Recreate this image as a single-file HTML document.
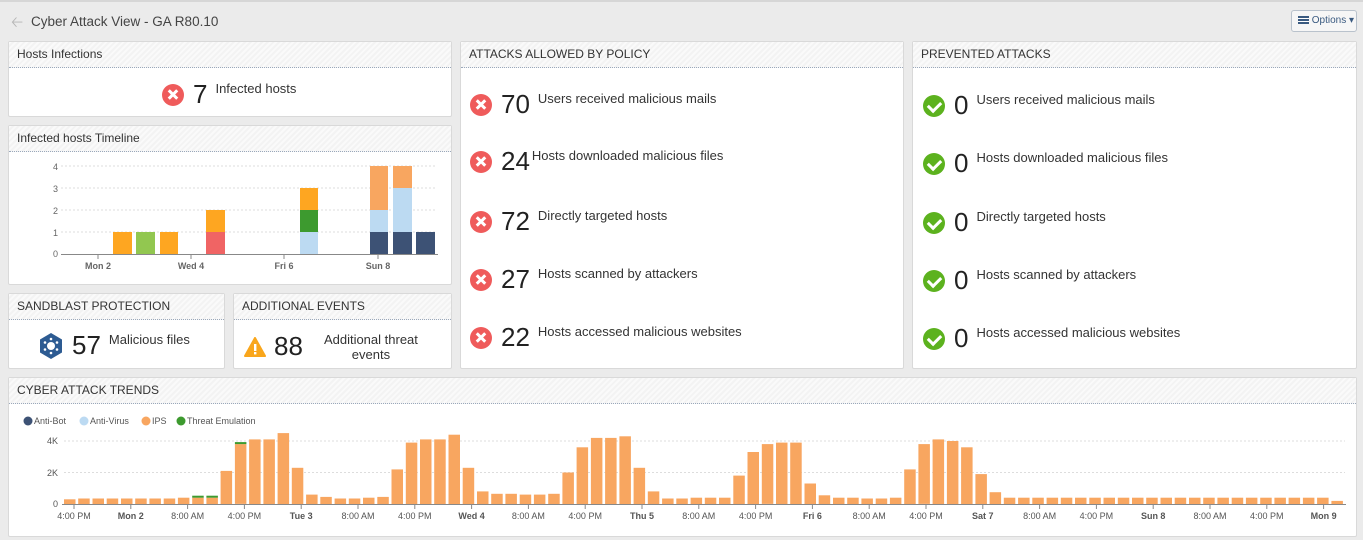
<!DOCTYPE html>
<html><head><meta charset="utf-8"><style>
*{box-sizing:border-box;margin:0;padding:0}
body{width:1363px;height:540px;background:#ebebeb;font-family:"Liberation Sans",sans-serif;color:#333;position:relative;overflow:hidden}
.p{position:absolute;background:#fff;border:1px solid #d9d9d9;border-radius:2px}
.h{height:26px;border-bottom:1px dotted #9aa8bb;background:repeating-linear-gradient(135deg,#fafafa 0 2px,#f3f3f3 2px 4px);font-size:12px;line-height:24px;padding-left:8px;color:#333}
.ab{position:absolute;display:flex;align-items:center}
.num{font-size:26px;color:#222;margin:0 8px 0 9px}
.lbl{font-size:13px;color:#333;position:relative;top:-6px}
.x{width:22px;height:22px;border-radius:50%;background:#ef5b5b;position:relative}
.x:before,.x:after{content:"";position:absolute;left:5px;top:9.5px;width:12px;height:3px;background:#fff;transform:rotate(45deg)}
.x:after{transform:rotate(-45deg)}
.ok{width:22px;height:22px;border-radius:50%;background:#5cb21e;position:relative}
.ok:after{content:"";position:absolute;left:7px;top:4px;width:6px;height:10px;border:solid #fff;border-width:0 3px 3px 0;transform:rotate(45deg)}
</style></head><body>
<div style="position:absolute;left:0;top:0;width:1363px;height:2px;background:#d6d6d6"></div>
<div style="position:absolute;left:11px;top:12px;color:#b5b5b5;font-size:15px">&#129120;</div>
<div style="position:absolute;left:31px;top:14px;font-size:13.5px;color:#444">Cyber Attack View - GA R80.10</div>
<div style="position:absolute;left:1291px;top:10px;width:66px;height:22px;border:1px solid #b9c2cc;border-radius:3px;background:#f6f6f6;font-size:10px;line-height:20px;padding-left:6px;color:#3a5a80"><span style="display:inline-block;width:11px;height:8px;border-top:2px solid #3a5a80;border-bottom:2px solid #3a5a80;position:relative;top:1px;background:linear-gradient(#fff 0 1px,#3a5a80 1px 3px,#fff 3px)"></span> Options ▾</div>

<div class="p" style="left:8px;top:41px;width:444px;height:76px"><div class="h">Hosts Infections</div>
<div class="ab" style="left:153px;top:37px"><div class="x"></div><span class="num">7</span><span class="lbl">Infected hosts</span></div></div>

<div class="p" style="left:8px;top:125px;width:444px;height:160px"><div class="h">Infected hosts Timeline</div>
<svg style="position:absolute;left:0;top:0" width="444" height="160" font-family="Liberation Sans" font-size="9" fill="#666">
<g stroke="#ddd" stroke-dasharray="2,2"><line x1="52" x2="428" y1="40" y2="40"/><line x1="52" x2="428" y1="62" y2="62"/><line x1="52" x2="428" y1="84" y2="84"/><line x1="52" x2="428" y1="106" y2="106"/></g>
<text x="44" y="44">4</text><text x="44" y="66">3</text><text x="44" y="88">2</text><text x="44" y="110">1</text><text x="44" y="131">0</text>
<rect x="104" y="106" width="19" height="22" fill="#fea621"/>
<rect x="127" y="106" width="19" height="22" fill="#92c750"/>
<rect x="151" y="106" width="18" height="22" fill="#fea621"/>
<rect x="197" y="106" width="19" height="22" fill="#f06464"/><rect x="197" y="84" width="19" height="22" fill="#fea621"/>
<rect x="291" y="106" width="18" height="22" fill="#bcdaf2"/><rect x="291" y="84" width="18" height="22" fill="#3d9a2f"/><rect x="291" y="62" width="18" height="22" fill="#fea621"/>
<rect x="361" y="106" width="18" height="22" fill="#3d5275"/><rect x="361" y="84" width="18" height="22" fill="#bcdaf2"/><rect x="361" y="40" width="18" height="44" fill="#f8a660"/>
<rect x="384" y="106" width="19" height="22" fill="#3d5275"/><rect x="384" y="62" width="19" height="44" fill="#bcdaf2"/><rect x="384" y="40" width="19" height="22" fill="#f8a660"/>
<rect x="407" y="106" width="19" height="22" fill="#3d5275"/>
<line x1="52" x2="429" y1="128.5" y2="128.5" stroke="#888"/>
<g stroke="#888"><line x1="89" x2="89" y1="128" y2="133"/><line x1="182" x2="182" y1="128" y2="133"/><line x1="275" x2="275" y1="128" y2="133"/><line x1="369" x2="369" y1="128" y2="133"/></g>
<g font-weight="bold" text-anchor="middle"><text x="89" y="143">Mon 2</text><text x="182" y="143">Wed 4</text><text x="275" y="143">Fri 6</text><text x="369" y="143">Sun 8</text></g>
</svg></div>

<div class="p" style="left:8px;top:293px;width:217px;height:76px"><div class="h">SANDBLAST PROTECTION</div>
<div class="ab" style="left:30px;top:36px"><svg width="24" height="26" viewBox="0 0 24 26"><polygon points="12,0 23,6.5 23,19.5 12,26 1,19.5 1,6.5" fill="#2d5b92"/><circle cx="12" cy="13" r="4" fill="#fff"/><g fill="#fff"><circle cx="12" cy="6" r="1.3"/><circle cx="12" cy="20" r="1.3"/><circle cx="6" cy="9.5" r="1.3"/><circle cx="18" cy="9.5" r="1.3"/><circle cx="6" cy="16.5" r="1.3"/><circle cx="18" cy="16.5" r="1.3"/></g></svg><span class="num">57</span><span class="lbl">Malicious files</span></div></div>

<div class="p" style="left:233px;top:293px;width:219px;height:76px"><div class="h">ADDITIONAL EVENTS</div>
<div class="ab" style="left:10px;top:37px"><svg width="22" height="20"><polygon points="11,1 21,19 1,19" fill="#f9a61c" stroke="#f9a61c" stroke-linejoin="round" stroke-width="2"/><rect x="10" y="7" width="2.4" height="7" fill="#fff"/><rect x="10" y="15" width="2.4" height="2.4" fill="#fff"/></svg><span class="num" style="margin-left:8px">88</span><span style="font-size:13px;text-align:center;width:120px;line-height:15px;position:relative;top:0">Additional threat<br>events</span></div></div>

<div class="p" style="left:460px;top:41px;width:444px;height:328px"><div class="h">ATTACKS ALLOWED BY POLICY</div>
<div class="ab" style="left:9px;top:47px"><div class="x"></div><span class="num">70</span><span class="lbl">Users received malicious mails</span></div>
<div class="ab" style="left:9px;top:104px"><div class="x"></div><span class="num">24</span><span class="lbl" style="margin-left:-6px">Hosts downloaded malicious files</span></div>
<div class="ab" style="left:9px;top:164px"><div class="x"></div><span class="num">72</span><span class="lbl">Directly targeted hosts</span></div>
<div class="ab" style="left:9px;top:222px"><div class="x"></div><span class="num">27</span><span class="lbl">Hosts scanned by attackers</span></div>
<div class="ab" style="left:9px;top:280px"><div class="x"></div><span class="num">22</span><span class="lbl">Hosts accessed malicious websites</span></div></div>

<div class="p" style="left:912px;top:41px;width:445px;height:328px"><div class="h">PREVENTED ATTACKS</div>
<div class="ab" style="left:10px;top:48px"><div class="ok"></div><span class="num">0</span><span class="lbl">Users received malicious mails</span></div>
<div class="ab" style="left:10px;top:106px"><div class="ok"></div><span class="num">0</span><span class="lbl">Hosts downloaded malicious files</span></div>
<div class="ab" style="left:10px;top:165px"><div class="ok"></div><span class="num">0</span><span class="lbl">Directly targeted hosts</span></div>
<div class="ab" style="left:10px;top:223px"><div class="ok"></div><span class="num">0</span><span class="lbl">Hosts scanned by attackers</span></div>
<div class="ab" style="left:10px;top:281px"><div class="ok"></div><span class="num">0</span><span class="lbl">Hosts accessed malicious websites</span></div></div>

<div class="p" style="left:8px;top:377px;width:1349px;height:160px"><div class="h">CYBER ATTACK TRENDS</div>
<svg id="tr" style="position:absolute;left:-9px;top:-378px" width="1363" height="540" font-family="Liberation Sans" font-size="9" fill="#555">
<g font-size="9" fill="#555">
<circle cx="28" cy="421" r="4.5" fill="#3d5275"/><text x="34" y="424">Anti-Bot</text>
<circle cx="84" cy="421" r="4.5" fill="#bcdaf2"/><text x="90" y="424">Anti-Virus</text>
<circle cx="146" cy="421" r="4.5" fill="#f8a660"/><text x="152" y="424">IPS</text>
<circle cx="181" cy="421" r="4.5" fill="#3d9a2f"/><text x="187" y="424">Threat Emulation</text></g>
<g stroke="#ddd" stroke-dasharray="2,2"><line x1="64" x2="1345" y1="441" y2="441"/><line x1="64" x2="1345" y1="472.5" y2="472.5"/></g>
<text x="58" y="444" text-anchor="end">4K</text><text x="58" y="476" text-anchor="end">2K</text><text x="58" y="507" text-anchor="end">0</text>
<g id="bars"></g>
<line x1="62" x2="1346" y1="504.5" y2="504.5" stroke="#888"/>
<g id="lab" text-anchor="middle"></g>
</svg></div>
<script>
var v=[0.3,0.35,0.35,0.35,0.35,0.35,0.35,0.35,0.4,0.4,0.4,2.1,3.8,4.1,4.1,4.5,2.3,0.6,0.45,0.35,0.35,0.4,0.45,2.2,3.9,4.1,4.1,4.4,2.3,0.8,0.65,0.65,0.6,0.6,0.65,2.0,3.6,4.2,4.2,4.3,2.3,0.8,0.35,0.35,0.4,0.4,0.4,1.8,3.3,3.8,3.9,3.9,1.3,0.55,0.4,0.4,0.35,0.35,0.4,2.2,3.8,4.1,4.0,3.6,1.9,0.75];
while(v.length<89)v.push(0.4);v.push(0.2);
var s='';
for(var i=0;i<90;i++){var x=64+14.24*i,h=v[i]*15.75;s+='<rect x="'+x.toFixed(1)+'" y="'+(504-h).toFixed(1)+'" width="11.5" height="'+h.toFixed(1)+'" fill="#f8a660"/>';
if(i==9||i==10||i==12)s+='<rect x="'+x.toFixed(1)+'" y="'+(504-h-2).toFixed(1)+'" width="11.5" height="2" fill="#3d9a2f"/>';}
document.getElementById('bars').innerHTML=s;
var d=['Mon 2','Tue 3','Wed 4','Thu 5','Fri 6','Sat 7','Sun 8','Mon 9'],t='';
for(var k=0;k<23;k++){var x=74+56.8*k,m=k%3,l,b='';if(m==0)l='4:00 PM';else if(m==1){l=d[(k-1)/3];b=' font-weight="bold"';}else l='8:00 AM';
t+='<line x1="'+x+'" x2="'+x+'" y1="504" y2="509" stroke="#888"/><text x="'+x+'" y="519"'+b+'>'+l+'</text>';}
document.getElementById('lab').innerHTML=t;
</script>
</body></html>
